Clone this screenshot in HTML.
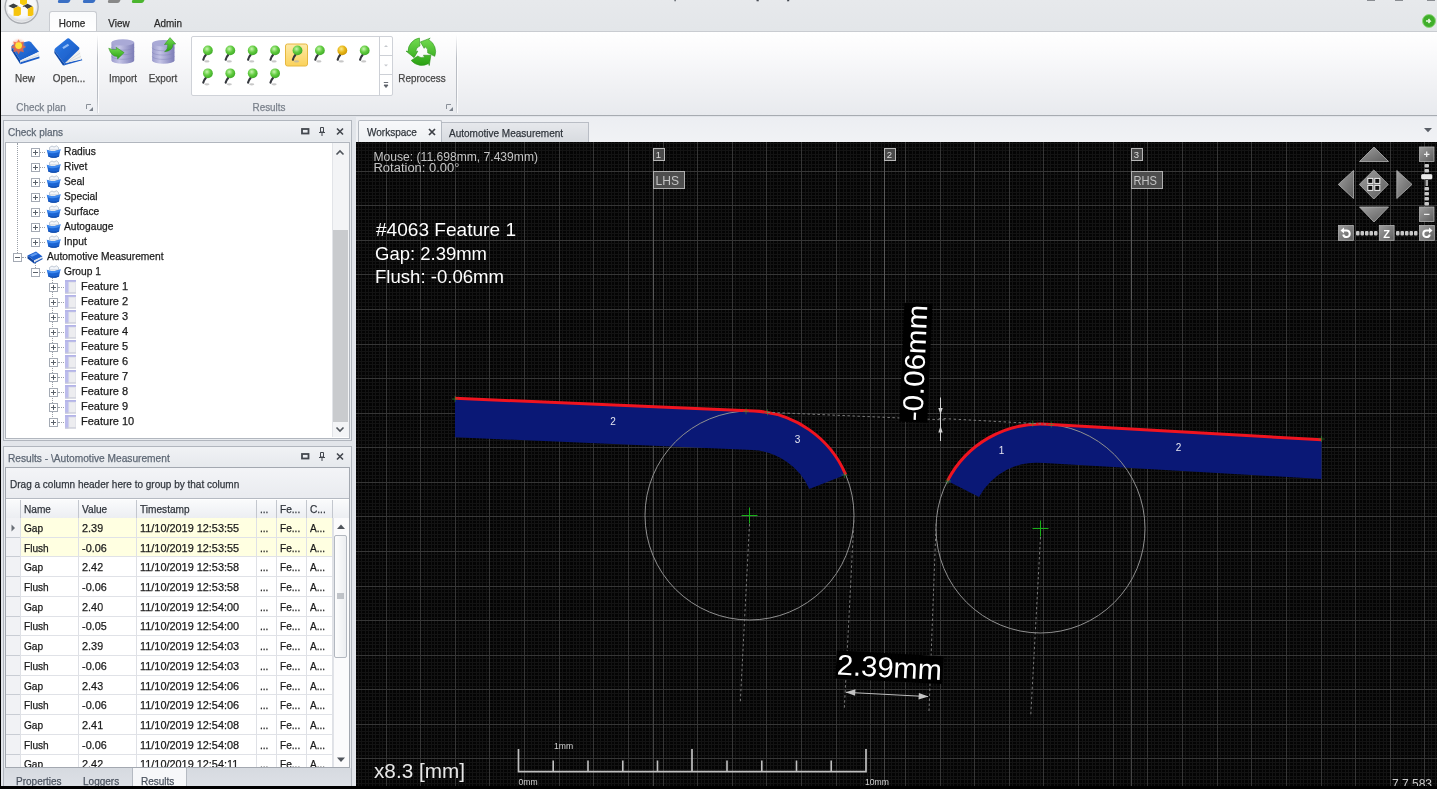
<!DOCTYPE html>
<html><head><meta charset="utf-8"><title>Automotive Measurement</title>
<style>
*{box-sizing:border-box;margin:0;padding:0}
html,body{width:1437px;height:789px;overflow:hidden;background:#000}
body{font-family:"Liberation Sans",sans-serif;font-size:11px;color:#1e1e1e;position:relative;-webkit-text-stroke:.25px}
.abs{position:absolute}
.t{position:absolute;white-space:nowrap;line-height:14px;transform-origin:0 0;transform:scaleX(.91)}
#win{position:absolute;left:1px;top:0;width:1436px;height:786px;background:#e2e5ea;overflow:hidden;will-change:transform}
#title{position:absolute;left:0;top:0;width:1436px;height:31px;background:linear-gradient(#e7e9ec,#e3e6e9)}
#ribbon{position:absolute;left:0;top:31px;width:1436px;height:85px;background:linear-gradient(#ffffff 0,#fbfbfc 20%,#eff0f3 70%,#e8eaee 100%);border-top:1px solid #c9ccd1;border-bottom:1px solid #a7abb1}
.rl{position:absolute;white-space:nowrap;font-size:11px;line-height:14px;color:#464646;text-align:center;transform:translateX(-50%) scaleX(.9)}
.gl{position:absolute;white-space:nowrap;font-size:11px;line-height:14px;color:#7a818b;text-align:center;transform:translateX(-50%) scaleX(.9)}
.panel{position:absolute;background:#e9ecf0;border:1px solid #b1b6be}
.phead{position:absolute;left:0;top:0;right:0;height:20px;background:linear-gradient(#f0f2f5,#e6e9ed);color:#5c6673}
.white{position:absolute;background:#fff;border:1px solid #b1b6be}
.trow{position:absolute;left:0;height:15px;line-height:15px;white-space:nowrap;font-size:11px;color:#1a1a1a;transform-origin:0 0;transform:scaleX(.93)}
.pm{position:absolute;width:9px;height:9px;border:1px solid #a4aab4;background:#fff}
.pm:before{content:"";position:absolute;left:1px;top:3px;width:5px;height:1px;background:#5a616b}
.pm.plus:after{content:"";position:absolute;left:3px;top:1px;width:1px;height:5px;background:#5a616b}
.cell{position:absolute;white-space:nowrap;font-size:11px;line-height:19px;color:#1a1a1a;overflow:hidden;transform-origin:0 0;transform:scaleX(.92)}
.cell.num{transform:scaleX(.99)}
#canvas{position:absolute;left:355px;top:142px;width:1081px;height:644px;background:#050505;overflow:hidden}
.wt{position:absolute;white-space:nowrap;color:#fff}
</style></head><body>
<div id="win">

<div id="title">
<div class="t" style="right:647px;top:-12px;font-size:11px;color:#3a3f47;transform-origin:100% 0">GapGun Pro 7.7.583 [Admin]</div>
<div class="abs" style="left:1366px;top:0;width:8px;height:1px;background:#8a8d92"></div>
<div class="abs" style="left:1394px;top:0;width:8px;height:1px;background:#8a8d92"></div>
<div class="abs" style="left:1426px;top:0;width:8px;height:1px;background:#8a8d92"></div>
<div class="abs" style="left:58px;top:-6px;width:12px;height:9px;background:#3a6fc4;border-radius:2px;transform:skewX(-20deg)"></div>
<div class="abs" style="left:83px;top:-6px;width:12px;height:9px;background:#3a6fc4;border-radius:2px;transform:skewX(-20deg)"></div>
<div class="abs" style="left:108px;top:-6px;width:12px;height:9px;background:#888;border-radius:2px;transform:skewX(-20deg)"></div>
<div class="abs" style="left:132px;top:-6px;width:12px;height:9px;background:#4bb52e;border-radius:2px;transform:skewX(-20deg)"></div>
<svg class="abs" style="left:0;top:0" width="44" height="30" viewBox="1 0 44 30">
<defs><radialGradient id="orb" cx="50%" cy="40%" r="60%"><stop offset="0" stop-color="#ffffff"/><stop offset="0.800" stop-color="#f4f5f6"/><stop offset="1" stop-color="#d4d6da"/></radialGradient>
<filter id="ob" x="-20%" y="-20%" width="140%" height="140%"><feGaussianBlur stdDeviation=".5"/></filter></defs>
<circle cx="21.600" cy="6.800" r="17.200" fill="#a9acb1"/><circle cx="21.600" cy="6.800" r="15.900" fill="#e9eaec"/><circle cx="21.600" cy="6.600" r="15" fill="url(#orb)"/>
<g filter="url(#ob)">
<path d="M20 -1h7v4.500l-3.500 2-3.500-2z" fill="#f6cc10"/>
<path d="M8.400 6l5-2.400 5 2.400-5 2.600z" fill="#3c4042"/><path d="M22.500 6.200l5-2.500 5.100 2.500-5.100 2.700z" fill="#3c4042"/>
<path d="M13.400 8.600l5-2.400 2.500 1.400v6.800l-2.500 1.500-5-.1z" fill="#f6c410"/>
<path d="M27.600 8.900l5.100-2.600.7 1.400v7l-1.800 1.200h-4z" fill="#f6c410"/>
<path d="M7.900 6.800l5.500 1.800v7.200L7.900 13z" fill="#fbfbfb"/><path d="M21 8l3.500-1.500 3.100 2.400v7h-6.600z" fill="#fafafa"/>
</g>
</svg>
<div class="abs" style="left:48px;top:11px;width:48px;height:21px;background:linear-gradient(#fafbfc,#ffffff);border:1px solid #c9ccd1;border-bottom:none;border-radius:3px 3px 0 0"></div>
<div class="rl" style="left:71px;top:15.500px;color:#2a2a2a">Home</div>
<div class="rl" style="left:118px;top:15.500px;color:#2a2a2a">View</div>
<div class="rl" style="left:167px;top:15.500px;color:#2a2a2a">Admin</div>
<svg class="abs" style="left:1420px;top:13px" width="16" height="16" viewBox="0 0 16 16"><circle cx="8" cy="8" r="6.5" fill="#3fae2a"/><circle cx="8" cy="8" r="6.5" fill="none" stroke="#8ed67c" stroke-width="1"/><path d="M5 8h4l-1.5-2M9 8l-1.5 2" stroke="#e6f7e0" stroke-width="1.5" fill="none"/></svg>
</div>
<div id="ribbon">
<div class="abs" style="left:0;top:0;width:96px;height:83px;background:linear-gradient(rgba(255,255,255,.6),rgba(240,242,246,.5))"></div>
<div class="abs" style="left:96px;top:3px;width:1px;height:78px;background:linear-gradient(rgba(180,184,190,0),#b9bdc4 30%,#b9bdc4 80%,rgba(180,184,190,.3))"></div>
<div class="abs" style="left:97px;top:3px;width:1px;height:78px;background:rgba(255,255,255,.8)"></div>
<div class="abs" style="left:455px;top:3px;width:1px;height:78px;background:linear-gradient(rgba(180,184,190,0),#b9bdc4 30%,#b9bdc4 80%,rgba(180,184,190,.3))"></div>
<div class="abs" style="left:456px;top:3px;width:1px;height:78px;background:rgba(255,255,255,.8)"></div>
<svg class="abs" style="left:0;top:0" width="480" height="84" viewBox="1 32 480 84">
<defs><linearGradient id="cyg" x1="0" x2="1"><stop offset="0" stop-color="#9c9ccc"/><stop offset=".35" stop-color="#c4c4e6"/><stop offset="1" stop-color="#7c7cb6"/></linearGradient><radialGradient id="pg" cx="40%" cy="35%" r="70%"><stop offset="0" stop-color="#c8f5b0"/><stop offset=".5" stop-color="#62cc40"/><stop offset="1" stop-color="#3aa624"/></radialGradient><radialGradient id="py" cx="40%" cy="35%" r="70%"><stop offset="0" stop-color="#fbe98a"/><stop offset=".5" stop-color="#e8b818"/><stop offset="1" stop-color="#c89208"/></radialGradient><linearGradient id="bk" x1="0" y1="0" x2="1" y2="1"><stop offset="0" stop-color="#2f7be6"/><stop offset="1" stop-color="#1556c0"/></linearGradient><linearGradient id="gr" x1="0" y1="0" x2="0" y2="1"><stop offset="0" stop-color="#74dc52"/><stop offset="1" stop-color="#28a012"/></linearGradient><filter id="bl" x="-30%" y="-30%" width="160%" height="160%"><feGaussianBlur stdDeviation=".45"/></filter><filter id="bl2" x="-50%" y="-50%" width="200%" height="200%"><feGaussianBlur stdDeviation="1.1"/></filter></defs>
<g filter="url(#bl)"><path d="M11.400 46.500Q12 44.800 14 44.300L28.600 41.300Q30 41.200 31 42.300L39 51.800L20.300 60.600Z" fill="url(#bk)"/><path d="M11.400 46.500L20.300 60.600V64.200L11.600 50.500Z" fill="#0f48a8"/><path d="M20.300 60.600L39 51.800L39.300 56.800L20.600 62.500Z" fill="#eef1f6"/><path d="M20.500 62.300L39.300 56.600L39.500 58.200L20.400 64.300Z" fill="#1a5cc8"/><path d="M21 61.600L39 55" stroke="#b9c2d0" stroke-width=".6"/></g>
<circle cx="18.600" cy="45.500" r="5.800" fill="#f48a6a" opacity=".55" filter="url(#bl2)"/>
<path d="M18.600 39.300l1.700 3.300 3.600-1-1 3.600 3.300 1.700-3.300 1.700 1 3.600-3.600-1-1.700 3.300-1.700-3.300-3.600 1 1-3.600-3.300-1.700 3.300-1.700-1-3.600 3.600 1z" fill="#f2673a" opacity=".8" filter="url(#bl)"/>
<circle cx="18.600" cy="45.600" r="3.400" fill="#ffe23a" filter="url(#bl)"/>
<g filter="url(#bl)"><path d="M64.500 65.200L82.300 60.300L81.800 58.800L64 63.600Z" fill="#1a5cc8"/><path d="M63.900 63.300L79.300 49.500L81.600 59.600Z" fill="#f1f2f0"/><path d="M66 62.500L80.200 53M66.500 63L81 56.500" stroke="#c9cdd2" stroke-width=".6"/><path d="M54.400 50.500Q54.200 49 55.500 48L67.300 38.600Q68.600 37.900 69.800 38.900L79.200 47.600Q79.700 48.600 79 49.600L64.300 63.800Z" fill="url(#bk)"/><path d="M54.400 50.500L64.300 63.800L64.600 65.600L62.800 65.200L54.400 53Z" fill="#0f48a8"/><path d="M62.300 47.300l5.600-3.600 1.300 1.700-5.600 3.600z" fill="#8fbaf6"/></g>
<g filter="url(#bl)"><path d="M111.4 42.400000000000006V60.599999999999994A11.399999999999991 3.2 0 0 0 134.2 60.599999999999994V42.400000000000006Z" fill="url(#cyg)"/><ellipse cx="122.8" cy="42.400000000000006" rx="11.399999999999991" ry="3.2" fill="#a9a9d6"/><path d="M111.4 47.0A11.399999999999991 3.2 0 0 0 134.2 47.0" fill="none" stroke="#8080b8" stroke-width=".7" opacity=".6"/><path d="M111.4 51.5A11.399999999999991 3.2 0 0 0 134.2 51.5" fill="none" stroke="#8080b8" stroke-width=".7" opacity=".6"/><path d="M111.4 56.1A11.399999999999991 3.2 0 0 0 134.2 56.1" fill="none" stroke="#8080b8" stroke-width=".7" opacity=".6"/><path d="M108.700 48.200Q113 50.300 116.500 49.400L116 47.300L124.200 52.600L117.600 59L117.300 56.400Q111.500 56.800 108.700 48.200Z" fill="url(#gr)" stroke="#2c8f1c" stroke-width=".5"/></g>
<g filter="url(#bl)"><path d="M152.1 43.2V60.599999999999994A11.200000000000003 3.2 0 0 0 174.5 60.599999999999994V43.2Z" fill="url(#cyg)"/><ellipse cx="163.3" cy="43.2" rx="11.200000000000003" ry="3.2" fill="#a9a9d6"/><path d="M152.1 47.6A11.200000000000003 3.2 0 0 0 174.5 47.6" fill="none" stroke="#8080b8" stroke-width=".7" opacity=".6"/><path d="M152.1 51.9A11.200000000000003 3.2 0 0 0 174.5 51.9" fill="none" stroke="#8080b8" stroke-width=".7" opacity=".6"/><path d="M152.1 56.2A11.200000000000003 3.2 0 0 0 174.5 56.2" fill="none" stroke="#8080b8" stroke-width=".7" opacity=".6"/><path d="M164.600 51.800Q168 49.500 167.800 44.300L164.400 44.600L170 37.600L175.800 44L172.800 44.200Q173.300 50.500 164.600 51.800Z" fill="url(#gr)" stroke="#2c8f1c" stroke-width=".5"/></g>
<rect x="191.500" y="36.500" width="201" height="59" rx="1.500" fill="#fff" stroke="#cfd2d8"/>
<path d="M379.500 36.500V95.500M379.500 55.500H392.500M379.500 74.500H392.500" stroke="#cdd0d6" fill="none"/>
<path d="M384 47l2-2 2 2zM384 64.500l2 2 2-2z" fill="#c6c9ce"/>
<path d="M383.800 82.500h4.400M384 85h4l-2 2.500z" stroke="#5a5f67" stroke-width=".9" fill="#5a5f67"/>
<defs><linearGradient id="sel" x1="0" y1="0" x2="0" y2="1"><stop offset="0" stop-color="#fde9a8"/><stop offset="1" stop-color="#fbd25a"/></linearGradient></defs>
<rect x="285.500" y="44" width="22" height="22" rx="2" fill="url(#sel)" stroke="#e6b840"/>
<g filter="url(#bl)"><ellipse cx="206.9" cy="61.4" rx="2.600" ry="1.100" fill="#b0b0b0" opacity=".7"/><path d="M205.9 54.8Q204.0 56.9 203.3 59.7" fill="none" stroke="#34373d" stroke-width="2.200" stroke-linecap="round"/><circle cx="207.9" cy="50.4" r="4.900" fill="url(#pg)"/></g>
<g filter="url(#bl)"><ellipse cx="229.3" cy="61.4" rx="2.600" ry="1.100" fill="#b0b0b0" opacity=".7"/><path d="M228.3 54.8Q226.4 56.9 225.7 59.7" fill="none" stroke="#34373d" stroke-width="2.200" stroke-linecap="round"/><circle cx="230.3" cy="50.4" r="4.900" fill="url(#pg)"/></g>
<g filter="url(#bl)"><ellipse cx="251.7" cy="61.4" rx="2.600" ry="1.100" fill="#b0b0b0" opacity=".7"/><path d="M250.7 54.8Q248.8 56.9 248.1 59.7" fill="none" stroke="#34373d" stroke-width="2.200" stroke-linecap="round"/><circle cx="252.7" cy="50.4" r="4.900" fill="url(#pg)"/></g>
<g filter="url(#bl)"><ellipse cx="274.1" cy="61.4" rx="2.600" ry="1.100" fill="#b0b0b0" opacity=".7"/><path d="M273.1 54.8Q271.2 56.9 270.5 59.7" fill="none" stroke="#34373d" stroke-width="2.200" stroke-linecap="round"/><circle cx="275.1" cy="50.4" r="4.900" fill="url(#pg)"/></g>
<g filter="url(#bl)"><ellipse cx="296.5" cy="61.4" rx="2.600" ry="1.100" fill="#b0b0b0" opacity=".7"/><path d="M295.5 54.8Q293.6 56.9 292.9 59.7" fill="none" stroke="#34373d" stroke-width="2.200" stroke-linecap="round"/><circle cx="297.5" cy="50.4" r="4.900" fill="url(#pg)"/></g>
<g filter="url(#bl)"><ellipse cx="318.9" cy="61.4" rx="2.600" ry="1.100" fill="#b0b0b0" opacity=".7"/><path d="M317.9 54.8Q316.0 56.9 315.3 59.7" fill="none" stroke="#34373d" stroke-width="2.200" stroke-linecap="round"/><circle cx="319.9" cy="50.4" r="4.900" fill="url(#pg)"/></g>
<g filter="url(#bl)"><ellipse cx="341.3" cy="61.4" rx="2.600" ry="1.100" fill="#b0b0b0" opacity=".7"/><path d="M340.3 54.8Q338.4 56.9 337.7 59.7" fill="none" stroke="#34373d" stroke-width="2.200" stroke-linecap="round"/><circle cx="342.3" cy="50.4" r="4.900" fill="url(#py)"/></g>
<g filter="url(#bl)"><ellipse cx="363.7" cy="61.4" rx="2.600" ry="1.100" fill="#b0b0b0" opacity=".7"/><path d="M362.7 54.8Q360.8 56.9 360.1 59.7" fill="none" stroke="#34373d" stroke-width="2.200" stroke-linecap="round"/><circle cx="364.7" cy="50.4" r="4.900" fill="url(#pg)"/></g>
<g filter="url(#bl)"><ellipse cx="206.9" cy="84.3" rx="2.600" ry="1.100" fill="#b0b0b0" opacity=".7"/><path d="M205.9 77.7Q204.0 79.8 203.3 82.6" fill="none" stroke="#34373d" stroke-width="2.200" stroke-linecap="round"/><circle cx="207.9" cy="73.3" r="4.900" fill="url(#pg)"/></g>
<g filter="url(#bl)"><ellipse cx="229.3" cy="84.3" rx="2.600" ry="1.100" fill="#b0b0b0" opacity=".7"/><path d="M228.3 77.7Q226.4 79.8 225.7 82.6" fill="none" stroke="#34373d" stroke-width="2.200" stroke-linecap="round"/><circle cx="230.3" cy="73.3" r="4.900" fill="url(#pg)"/></g>
<g filter="url(#bl)"><ellipse cx="251.7" cy="84.3" rx="2.600" ry="1.100" fill="#b0b0b0" opacity=".7"/><path d="M250.7 77.7Q248.8 79.8 248.1 82.6" fill="none" stroke="#34373d" stroke-width="2.200" stroke-linecap="round"/><circle cx="252.7" cy="73.3" r="4.900" fill="url(#pg)"/></g>
<g filter="url(#bl)"><ellipse cx="274.1" cy="84.3" rx="2.600" ry="1.100" fill="#b0b0b0" opacity=".7"/><path d="M273.1 77.7Q271.2 79.8 270.5 82.6" fill="none" stroke="#34373d" stroke-width="2.200" stroke-linecap="round"/><circle cx="275.1" cy="73.3" r="4.900" fill="url(#pg)"/></g>
<g filter="url(#bl)"><path d="M419.40 38.01A13.800 13.800 0 0 0 408.00 51.60L406.01 51.05L414.08 57.63L417.82 51.18L415.80 51.39A6 6 0 0 1 419.95 45.89ZM411.23 60.47A13.800 13.800 0 0 0 428.70 63.55L429.22 65.55L430.89 55.27L423.43 55.25L424.62 56.90A6 6 0 0 1 417.79 56.06ZM434.77 56.32A13.800 13.800 0 0 0 428.70 39.65L430.17 38.20L420.44 41.90L424.15 48.36L424.98 46.51A6 6 0 0 1 427.67 52.85Z" fill="url(#gr)" stroke="#2a921a" stroke-width=".6"/></g>
</svg>
<div class="rl" style="left:24px;top:38.7px">New</div>
<div class="rl" style="left:67.5px;top:38.7px">Open...</div>
<div class="rl" style="left:121.5px;top:38.7px">Import</div>
<div class="rl" style="left:162px;top:38.7px">Export</div>
<div class="rl" style="left:420.5px;top:38.7px">Reprocess</div>
<div class="gl" style="left:40px;top:68px">Check plan</div>
<div class="gl" style="left:268px;top:68px">Results</div>
<svg class="abs" style="left:85px;top:72px" width="8" height="8" viewBox="0 0 8 8"><path d="M.5 5V.5H5" fill="none" stroke="#8a9099"/><path d="M7 3v4H3z" fill="#7a818b"/></svg>
<svg class="abs" style="left:444.5px;top:72px" width="8" height="8" viewBox="0 0 8 8"><path d="M.5 5V.5H5" fill="none" stroke="#8a9099"/><path d="M7 3v4H3z" fill="#7a818b"/></svg>
</div>
<div class="panel" style="left:2px;top:120px;width:349px;height:321px">
<div class="phead"><div class="t" style="left:4px;top:4px;color:#5c6673">Check plans</div>
<svg class="abs" style="left:296px;top:5px" width="48" height="12" viewBox="0 0 48 12">
<rect x="2" y="3" width="6.500" height="4.500" fill="none" stroke="#43474e" stroke-width="1.800"/>
<path d="M20.500 1.500h3v4.500h-3zM19 6.500h6M22 7v3" fill="none" stroke="#43474e" stroke-width="1"/>
<path d="M37 2.500l6 6M43 2.500l-6 6" stroke="#43474e" stroke-width="1.600"/></svg>
</div>
<div class="white" style="left:1px;top:21px;width:345px;height:297px;overflow:hidden">
<div class="abs" style="left:11px;top:0;width:0;height:110px;border-left:1px dotted #9aa0a8"></div>
<div class="abs" style="left:29px;top:119px;width:0;height:6px;border-left:1px dotted #9aa0a8"></div>
<div class="abs" style="left:46px;top:135px;width:0;height:143px;border-left:1px dotted #9aa0a8"></div>
<div class="pm plus" style="left:25px;top:5px"></div>
<div class="abs" style="left:34px;top:9px;width:5px;height:0;border-top:1px dotted #9aa0a8"></div>
<svg class="abs" style="left:40px;top:2px" width="15" height="14" viewBox="0 0 15 14">
<path d="M3.500 5V2.500l2.500-1.500 2 1 2.500-1.200 2 1.700V5z" fill="#f2f5fa" stroke="#a9b4c4" stroke-width=".7"/>
<path d="M.8 4.800c3.200 1.800 9.700 1.800 13.700-.5l-1.500 7.200c-3 1.800-7.500 1.800-10.700 0z" fill="#1a63d2"/><path d="M.8 4.800c3.200 1.800 9.700 1.800 13.700-.5l-.5 2.300c-4 2.200-9.500 2.200-12.700.4z" fill="#3f8af0"/><path d="M2 10.500c3.200 1.600 8 1.600 11.200 0l-.2 1c-3 1.800-7.500 1.800-10.700 0z" fill="#134ba8"/></svg>
<div class="trow" style="left:57.5px;top:1px">Radius</div>
<div class="pm plus" style="left:25px;top:20px"></div>
<div class="abs" style="left:34px;top:24px;width:5px;height:0;border-top:1px dotted #9aa0a8"></div>
<svg class="abs" style="left:40px;top:17px" width="15" height="14" viewBox="0 0 15 14">
<path d="M3.500 5V2.500l2.500-1.500 2 1 2.500-1.200 2 1.700V5z" fill="#f2f5fa" stroke="#a9b4c4" stroke-width=".7"/>
<path d="M.8 4.800c3.200 1.800 9.700 1.800 13.700-.5l-1.500 7.200c-3 1.800-7.500 1.800-10.700 0z" fill="#1a63d2"/><path d="M.8 4.800c3.200 1.800 9.700 1.800 13.700-.5l-.5 2.300c-4 2.200-9.500 2.200-12.700.4z" fill="#3f8af0"/><path d="M2 10.500c3.200 1.600 8 1.600 11.200 0l-.2 1c-3 1.800-7.500 1.800-10.700 0z" fill="#134ba8"/></svg>
<div class="trow" style="left:57.5px;top:16px">Rivet</div>
<div class="pm plus" style="left:25px;top:35px"></div>
<div class="abs" style="left:34px;top:39px;width:5px;height:0;border-top:1px dotted #9aa0a8"></div>
<svg class="abs" style="left:40px;top:32px" width="15" height="14" viewBox="0 0 15 14">
<path d="M3.500 5V2.500l2.500-1.500 2 1 2.500-1.200 2 1.700V5z" fill="#f2f5fa" stroke="#a9b4c4" stroke-width=".7"/>
<path d="M.8 4.800c3.200 1.800 9.700 1.800 13.700-.5l-1.500 7.200c-3 1.800-7.500 1.800-10.700 0z" fill="#1a63d2"/><path d="M.8 4.800c3.200 1.800 9.700 1.800 13.700-.5l-.5 2.300c-4 2.200-9.500 2.200-12.700.4z" fill="#3f8af0"/><path d="M2 10.500c3.200 1.600 8 1.600 11.200 0l-.2 1c-3 1.800-7.500 1.800-10.700 0z" fill="#134ba8"/></svg>
<div class="trow" style="left:57.5px;top:31px">Seal</div>
<div class="pm plus" style="left:25px;top:50px"></div>
<div class="abs" style="left:34px;top:54px;width:5px;height:0;border-top:1px dotted #9aa0a8"></div>
<svg class="abs" style="left:40px;top:47px" width="15" height="14" viewBox="0 0 15 14">
<path d="M3.500 5V2.500l2.500-1.500 2 1 2.500-1.200 2 1.700V5z" fill="#f2f5fa" stroke="#a9b4c4" stroke-width=".7"/>
<path d="M.8 4.800c3.200 1.800 9.700 1.800 13.700-.5l-1.500 7.200c-3 1.800-7.500 1.800-10.700 0z" fill="#1a63d2"/><path d="M.8 4.800c3.200 1.800 9.700 1.800 13.700-.5l-.5 2.300c-4 2.200-9.500 2.200-12.700.4z" fill="#3f8af0"/><path d="M2 10.500c3.200 1.600 8 1.600 11.200 0l-.2 1c-3 1.800-7.500 1.800-10.700 0z" fill="#134ba8"/></svg>
<div class="trow" style="left:57.5px;top:46px">Special</div>
<div class="pm plus" style="left:25px;top:65px"></div>
<div class="abs" style="left:34px;top:69px;width:5px;height:0;border-top:1px dotted #9aa0a8"></div>
<svg class="abs" style="left:40px;top:62px" width="15" height="14" viewBox="0 0 15 14">
<path d="M3.500 5V2.500l2.500-1.500 2 1 2.500-1.200 2 1.700V5z" fill="#f2f5fa" stroke="#a9b4c4" stroke-width=".7"/>
<path d="M.8 4.800c3.200 1.800 9.700 1.800 13.700-.5l-1.500 7.200c-3 1.800-7.500 1.800-10.700 0z" fill="#1a63d2"/><path d="M.8 4.800c3.200 1.800 9.700 1.800 13.700-.5l-.5 2.300c-4 2.200-9.500 2.200-12.700.4z" fill="#3f8af0"/><path d="M2 10.500c3.200 1.600 8 1.600 11.200 0l-.2 1c-3 1.800-7.500 1.800-10.700 0z" fill="#134ba8"/></svg>
<div class="trow" style="left:57.5px;top:61px">Surface</div>
<div class="pm plus" style="left:25px;top:80px"></div>
<div class="abs" style="left:34px;top:84px;width:5px;height:0;border-top:1px dotted #9aa0a8"></div>
<svg class="abs" style="left:40px;top:77px" width="15" height="14" viewBox="0 0 15 14">
<path d="M3.500 5V2.500l2.500-1.500 2 1 2.500-1.200 2 1.700V5z" fill="#f2f5fa" stroke="#a9b4c4" stroke-width=".7"/>
<path d="M.8 4.800c3.200 1.800 9.700 1.800 13.700-.5l-1.500 7.200c-3 1.800-7.500 1.800-10.700 0z" fill="#1a63d2"/><path d="M.8 4.800c3.200 1.800 9.700 1.800 13.700-.5l-.5 2.300c-4 2.200-9.500 2.200-12.700.4z" fill="#3f8af0"/><path d="M2 10.500c3.200 1.600 8 1.600 11.200 0l-.2 1c-3 1.800-7.500 1.800-10.700 0z" fill="#134ba8"/></svg>
<div class="trow" style="left:57.5px;top:76px">Autogauge</div>
<div class="pm plus" style="left:25px;top:95px"></div>
<div class="abs" style="left:34px;top:99px;width:5px;height:0;border-top:1px dotted #9aa0a8"></div>
<svg class="abs" style="left:40px;top:92px" width="15" height="14" viewBox="0 0 15 14">
<path d="M3.500 5V2.500l2.500-1.500 2 1 2.500-1.200 2 1.700V5z" fill="#f2f5fa" stroke="#a9b4c4" stroke-width=".7"/>
<path d="M.8 4.800c3.200 1.800 9.700 1.800 13.700-.5l-1.500 7.200c-3 1.800-7.500 1.800-10.700 0z" fill="#1a63d2"/><path d="M.8 4.800c3.200 1.800 9.700 1.800 13.700-.5l-.5 2.300c-4 2.200-9.500 2.200-12.700.4z" fill="#3f8af0"/><path d="M2 10.500c3.200 1.600 8 1.600 11.200 0l-.2 1c-3 1.800-7.500 1.800-10.700 0z" fill="#134ba8"/></svg>
<div class="trow" style="left:57.5px;top:91px">Input</div>
<div class="pm" style="left:7px;top:110px"></div>
<div class="abs" style="left:16px;top:114px;width:4px;height:0;border-top:1px dotted #9aa0a8"></div>
<svg class="abs" style="left:21px;top:108px" width="16" height="13" viewBox="0 0 16 13">
<path d="M.5 4.500l8.500-4 6.500 5-8.500 4z" fill="#1a5fd0"/><path d="M.5 4.500l6.500 5v3L.5 7.500z" fill="#0f429c"/><path d="M7 9.500l8.500-4v2l-8.500 4.500z" fill="#dfe5ee"/><path d="M7 11.500l8.500-4.500v1.200l-8.500 4.600z" fill="#1752b8"/><path d="M3 4.300l6-2.800 2 1.400-6 2.900z" fill="#5f9af0"/></svg>
<div class="trow" style="left:40.5px;top:106px">Automotive Measurement</div>
<div class="pm" style="left:25px;top:125px"></div>
<div class="abs" style="left:34px;top:129px;width:5px;height:0;border-top:1px dotted #9aa0a8"></div>
<svg class="abs" style="left:40px;top:122px" width="15" height="14" viewBox="0 0 15 14">
<path d="M3.500 5V2.500l2.500-1.500 2 1 2.500-1.200 2 1.700V5z" fill="#f2f5fa" stroke="#a9b4c4" stroke-width=".7"/>
<path d="M.8 4.800c3.200 1.800 9.700 1.800 13.700-.5l-1.500 7.200c-3 1.800-7.500 1.800-10.700 0z" fill="#1a63d2"/><path d="M.8 4.800c3.200 1.800 9.700 1.800 13.700-.5l-.5 2.300c-4 2.200-9.500 2.200-12.700.4z" fill="#3f8af0"/><path d="M2 10.500c3.200 1.600 8 1.600 11.200 0l-.2 1c-3 1.800-7.500 1.800-10.700 0z" fill="#134ba8"/></svg>
<div class="trow" style="left:57.5px;top:121px">Group 1</div>
<div class="pm plus" style="left:42.5px;top:140px"></div>
<div class="abs" style="left:51.5px;top:144px;width:6.5px;height:0;border-top:1px dotted #9aa0a8"></div>
<svg class="abs" style="left:59px;top:137px" width="11" height="14" viewBox="0 0 11 14">
<rect x="0" y="0" width="11" height="13.500" fill="#e3e4ea"/><rect x="0" y="0" width="3.500" height="13.500" fill="#bcbcec"/><rect x="0" y="0" width="11" height="1.800" fill="#b4b4e8"/><rect x="4.500" y="3" width="5.500" height="9" fill="#ededf0"/><rect x="0" y="12.500" width="11" height="1" fill="#c8c9d6"/></svg>
<div class="trow" style="left:75px;top:136px;transform:scaleX(1.0)">Feature 1</div>
<div class="pm plus" style="left:42.5px;top:155px"></div>
<div class="abs" style="left:51.5px;top:159px;width:6.5px;height:0;border-top:1px dotted #9aa0a8"></div>
<svg class="abs" style="left:59px;top:152px" width="11" height="14" viewBox="0 0 11 14">
<rect x="0" y="0" width="11" height="13.500" fill="#e3e4ea"/><rect x="0" y="0" width="3.500" height="13.500" fill="#bcbcec"/><rect x="0" y="0" width="11" height="1.800" fill="#b4b4e8"/><rect x="4.500" y="3" width="5.500" height="9" fill="#ededf0"/><rect x="0" y="12.500" width="11" height="1" fill="#c8c9d6"/></svg>
<div class="trow" style="left:75px;top:151px;transform:scaleX(1.0)">Feature 2</div>
<div class="pm plus" style="left:42.5px;top:170px"></div>
<div class="abs" style="left:51.5px;top:174px;width:6.5px;height:0;border-top:1px dotted #9aa0a8"></div>
<svg class="abs" style="left:59px;top:167px" width="11" height="14" viewBox="0 0 11 14">
<rect x="0" y="0" width="11" height="13.500" fill="#e3e4ea"/><rect x="0" y="0" width="3.500" height="13.500" fill="#bcbcec"/><rect x="0" y="0" width="11" height="1.800" fill="#b4b4e8"/><rect x="4.500" y="3" width="5.500" height="9" fill="#ededf0"/><rect x="0" y="12.500" width="11" height="1" fill="#c8c9d6"/></svg>
<div class="trow" style="left:75px;top:166px;transform:scaleX(1.0)">Feature 3</div>
<div class="pm plus" style="left:42.5px;top:185px"></div>
<div class="abs" style="left:51.5px;top:189px;width:6.5px;height:0;border-top:1px dotted #9aa0a8"></div>
<svg class="abs" style="left:59px;top:182px" width="11" height="14" viewBox="0 0 11 14">
<rect x="0" y="0" width="11" height="13.500" fill="#e3e4ea"/><rect x="0" y="0" width="3.500" height="13.500" fill="#bcbcec"/><rect x="0" y="0" width="11" height="1.800" fill="#b4b4e8"/><rect x="4.500" y="3" width="5.500" height="9" fill="#ededf0"/><rect x="0" y="12.500" width="11" height="1" fill="#c8c9d6"/></svg>
<div class="trow" style="left:75px;top:181px;transform:scaleX(1.0)">Feature 4</div>
<div class="pm plus" style="left:42.5px;top:200px"></div>
<div class="abs" style="left:51.5px;top:204px;width:6.5px;height:0;border-top:1px dotted #9aa0a8"></div>
<svg class="abs" style="left:59px;top:197px" width="11" height="14" viewBox="0 0 11 14">
<rect x="0" y="0" width="11" height="13.500" fill="#e3e4ea"/><rect x="0" y="0" width="3.500" height="13.500" fill="#bcbcec"/><rect x="0" y="0" width="11" height="1.800" fill="#b4b4e8"/><rect x="4.500" y="3" width="5.500" height="9" fill="#ededf0"/><rect x="0" y="12.500" width="11" height="1" fill="#c8c9d6"/></svg>
<div class="trow" style="left:75px;top:196px;transform:scaleX(1.0)">Feature 5</div>
<div class="pm plus" style="left:42.5px;top:215px"></div>
<div class="abs" style="left:51.5px;top:219px;width:6.5px;height:0;border-top:1px dotted #9aa0a8"></div>
<svg class="abs" style="left:59px;top:212px" width="11" height="14" viewBox="0 0 11 14">
<rect x="0" y="0" width="11" height="13.500" fill="#e3e4ea"/><rect x="0" y="0" width="3.500" height="13.500" fill="#bcbcec"/><rect x="0" y="0" width="11" height="1.800" fill="#b4b4e8"/><rect x="4.500" y="3" width="5.500" height="9" fill="#ededf0"/><rect x="0" y="12.500" width="11" height="1" fill="#c8c9d6"/></svg>
<div class="trow" style="left:75px;top:211px;transform:scaleX(1.0)">Feature 6</div>
<div class="pm plus" style="left:42.5px;top:230px"></div>
<div class="abs" style="left:51.5px;top:234px;width:6.5px;height:0;border-top:1px dotted #9aa0a8"></div>
<svg class="abs" style="left:59px;top:227px" width="11" height="14" viewBox="0 0 11 14">
<rect x="0" y="0" width="11" height="13.500" fill="#e3e4ea"/><rect x="0" y="0" width="3.500" height="13.500" fill="#bcbcec"/><rect x="0" y="0" width="11" height="1.800" fill="#b4b4e8"/><rect x="4.500" y="3" width="5.500" height="9" fill="#ededf0"/><rect x="0" y="12.500" width="11" height="1" fill="#c8c9d6"/></svg>
<div class="trow" style="left:75px;top:226px;transform:scaleX(1.0)">Feature 7</div>
<div class="pm plus" style="left:42.5px;top:245px"></div>
<div class="abs" style="left:51.5px;top:249px;width:6.5px;height:0;border-top:1px dotted #9aa0a8"></div>
<svg class="abs" style="left:59px;top:242px" width="11" height="14" viewBox="0 0 11 14">
<rect x="0" y="0" width="11" height="13.500" fill="#e3e4ea"/><rect x="0" y="0" width="3.500" height="13.500" fill="#bcbcec"/><rect x="0" y="0" width="11" height="1.800" fill="#b4b4e8"/><rect x="4.500" y="3" width="5.500" height="9" fill="#ededf0"/><rect x="0" y="12.500" width="11" height="1" fill="#c8c9d6"/></svg>
<div class="trow" style="left:75px;top:241px;transform:scaleX(1.0)">Feature 8</div>
<div class="pm plus" style="left:42.5px;top:260px"></div>
<div class="abs" style="left:51.5px;top:264px;width:6.5px;height:0;border-top:1px dotted #9aa0a8"></div>
<svg class="abs" style="left:59px;top:257px" width="11" height="14" viewBox="0 0 11 14">
<rect x="0" y="0" width="11" height="13.500" fill="#e3e4ea"/><rect x="0" y="0" width="3.500" height="13.500" fill="#bcbcec"/><rect x="0" y="0" width="11" height="1.800" fill="#b4b4e8"/><rect x="4.500" y="3" width="5.500" height="9" fill="#ededf0"/><rect x="0" y="12.500" width="11" height="1" fill="#c8c9d6"/></svg>
<div class="trow" style="left:75px;top:256px;transform:scaleX(1.0)">Feature 9</div>
<div class="pm plus" style="left:42.5px;top:275px"></div>
<div class="abs" style="left:51.5px;top:279px;width:6.5px;height:0;border-top:1px dotted #9aa0a8"></div>
<svg class="abs" style="left:59px;top:272px" width="11" height="14" viewBox="0 0 11 14">
<rect x="0" y="0" width="11" height="13.500" fill="#e3e4ea"/><rect x="0" y="0" width="3.500" height="13.500" fill="#bcbcec"/><rect x="0" y="0" width="11" height="1.800" fill="#b4b4e8"/><rect x="4.500" y="3" width="5.500" height="9" fill="#ededf0"/><rect x="0" y="12.500" width="11" height="1" fill="#c8c9d6"/></svg>
<div class="trow" style="left:75px;top:271px;transform:scaleX(1.0)">Feature 10</div>
<div class="abs" style="left:326px;top:0;width:17px;height:294px;background:#f3f4f6;border-left:1px solid #e2e4e8"></div>
<div class="abs" style="left:327px;top:87px;width:15px;height:192px;background:#c9cbce"></div>
<svg class="abs" style="left:329px;top:6px" width="10" height="7" viewBox="0 0 10 7"><path d="M1.500 5.500l3.500-3.500 3.500 3.500" fill="none" stroke="#50555c" stroke-width="1.600"/></svg>
<svg class="abs" style="left:329px;top:283px" width="10" height="7" viewBox="0 0 10 7"><path d="M1.500 1.500l3.500 3.500 3.500-3.500" fill="none" stroke="#50555c" stroke-width="1.600"/></svg>
</div></div>
<div class="panel" style="left:2px;top:446px;width:349px;height:341px">
<div class="phead" style="height:20px"><div class="t" style="left:4px;top:3.500px;color:#5c6673;transform:scaleX(.925)">Results - \Automotive Measurement</div>
<svg class="abs" style="left:296px;top:4px" width="48" height="12" viewBox="0 0 48 12">
<rect x="2" y="3" width="6.500" height="4.500" fill="none" stroke="#43474e" stroke-width="1.800"/>
<path d="M20.500 1.500h3v4.500h-3zM19 6.500h6M22 7v3" fill="none" stroke="#43474e" stroke-width="1"/>
<path d="M37 2.500l6 6M43 2.500l-6 6" stroke="#43474e" stroke-width="1.600"/></svg>
</div>
<div class="abs" style="left:1px;top:20px;width:345px;height:301px;background:#fff;border:1px solid #a3a8b0;overflow:hidden">
<div class="abs" style="left:0;top:0;width:343px;height:31px;background:linear-gradient(#f3f4f7,#e9ebef);border-bottom:1px solid #b5bac2"></div>
<div class="t" style="left:4px;top:9px;color:#30353c;margin-left:-.5px">Drag a column header here to group by that column</div>
<div class="abs" style="left:0;top:31.5px;width:343px;height:19px;background:linear-gradient(#fafbfc,#eceef2);border-bottom:1px solid #b5bac2"></div>
<div class="abs" style="left:14px;top:32px;width:1px;height:18px;background:#c3c7ce"></div>
<div class="abs" style="left:72px;top:32px;width:1px;height:18px;background:#c3c7ce"></div>
<div class="abs" style="left:130px;top:32px;width:1px;height:18px;background:#c3c7ce"></div>
<div class="abs" style="left:250px;top:32px;width:1px;height:18px;background:#c3c7ce"></div>
<div class="abs" style="left:270px;top:32px;width:1px;height:18px;background:#c3c7ce"></div>
<div class="abs" style="left:300px;top:32px;width:1px;height:18px;background:#c3c7ce"></div>
<div class="abs" style="left:326px;top:32px;width:1px;height:18px;background:#c3c7ce"></div>
<div class="cell" style="left:18px;top:31.5px;color:#30353c">Name</div>
<div class="cell" style="left:76px;top:31.5px;color:#30353c">Value</div>
<div class="cell" style="left:134px;top:31.5px;color:#30353c">Timestamp</div>
<div class="cell" style="left:254px;top:31.5px;color:#30353c">...</div>
<div class="cell" style="left:274px;top:31.5px;color:#30353c">Fe...</div>
<div class="cell" style="left:304px;top:31.5px;color:#30353c">C...</div>
<div class="abs" style="left:14px;top:50.00px;width:312px;height:19.72px;background:#ffffe1;border-bottom:1px solid #e0e2e7"></div>
<div class="abs" style="left:0;top:50.00px;width:14px;height:19.72px;background:#f1f2f5;border-bottom:1px solid #c9cdd4"></div>
<div class="cell" style="left:18px;top:50.80px">Gap</div>
<div class="cell num" style="left:76px;top:50.80px">2.39</div>
<div class="cell num" style="left:134px;top:50.80px">11/10/2019 12:53:55</div>
<div class="cell" style="left:254px;top:50.80px">...</div>
<div class="cell" style="left:274px;top:50.80px">Fe...</div>
<div class="cell" style="left:304px;top:50.80px">A...</div>
<div class="abs" style="left:14px;top:69.72px;width:312px;height:19.72px;background:#ffffe1;border-bottom:1px solid #e0e2e7"></div>
<div class="abs" style="left:0;top:69.72px;width:14px;height:19.72px;background:#f1f2f5;border-bottom:1px solid #c9cdd4"></div>
<div class="cell" style="left:18px;top:70.52px">Flush</div>
<div class="cell num" style="left:76px;top:70.52px">-0.06</div>
<div class="cell num" style="left:134px;top:70.52px">11/10/2019 12:53:55</div>
<div class="cell" style="left:254px;top:70.52px">...</div>
<div class="cell" style="left:274px;top:70.52px">Fe...</div>
<div class="cell" style="left:304px;top:70.52px">A...</div>
<div class="abs" style="left:14px;top:89.44px;width:312px;height:19.72px;background:#fff;border-bottom:1px solid #e0e2e7"></div>
<div class="abs" style="left:0;top:89.44px;width:14px;height:19.72px;background:#f1f2f5;border-bottom:1px solid #c9cdd4"></div>
<div class="cell" style="left:18px;top:90.24px">Gap</div>
<div class="cell num" style="left:76px;top:90.24px">2.42</div>
<div class="cell num" style="left:134px;top:90.24px">11/10/2019 12:53:58</div>
<div class="cell" style="left:254px;top:90.24px">...</div>
<div class="cell" style="left:274px;top:90.24px">Fe...</div>
<div class="cell" style="left:304px;top:90.24px">A...</div>
<div class="abs" style="left:14px;top:109.16px;width:312px;height:19.72px;background:#fff;border-bottom:1px solid #e0e2e7"></div>
<div class="abs" style="left:0;top:109.16px;width:14px;height:19.72px;background:#f1f2f5;border-bottom:1px solid #c9cdd4"></div>
<div class="cell" style="left:18px;top:109.96px">Flush</div>
<div class="cell num" style="left:76px;top:109.96px">-0.06</div>
<div class="cell num" style="left:134px;top:109.96px">11/10/2019 12:53:58</div>
<div class="cell" style="left:254px;top:109.96px">...</div>
<div class="cell" style="left:274px;top:109.96px">Fe...</div>
<div class="cell" style="left:304px;top:109.96px">A...</div>
<div class="abs" style="left:14px;top:128.88px;width:312px;height:19.72px;background:#fff;border-bottom:1px solid #e0e2e7"></div>
<div class="abs" style="left:0;top:128.88px;width:14px;height:19.72px;background:#f1f2f5;border-bottom:1px solid #c9cdd4"></div>
<div class="cell" style="left:18px;top:129.68px">Gap</div>
<div class="cell num" style="left:76px;top:129.68px">2.40</div>
<div class="cell num" style="left:134px;top:129.68px">11/10/2019 12:54:00</div>
<div class="cell" style="left:254px;top:129.68px">...</div>
<div class="cell" style="left:274px;top:129.68px">Fe...</div>
<div class="cell" style="left:304px;top:129.68px">A...</div>
<div class="abs" style="left:14px;top:148.60px;width:312px;height:19.72px;background:#fff;border-bottom:1px solid #e0e2e7"></div>
<div class="abs" style="left:0;top:148.60px;width:14px;height:19.72px;background:#f1f2f5;border-bottom:1px solid #c9cdd4"></div>
<div class="cell" style="left:18px;top:149.40px">Flush</div>
<div class="cell num" style="left:76px;top:149.40px">-0.05</div>
<div class="cell num" style="left:134px;top:149.40px">11/10/2019 12:54:00</div>
<div class="cell" style="left:254px;top:149.40px">...</div>
<div class="cell" style="left:274px;top:149.40px">Fe...</div>
<div class="cell" style="left:304px;top:149.40px">A...</div>
<div class="abs" style="left:14px;top:168.32px;width:312px;height:19.72px;background:#fff;border-bottom:1px solid #e0e2e7"></div>
<div class="abs" style="left:0;top:168.32px;width:14px;height:19.72px;background:#f1f2f5;border-bottom:1px solid #c9cdd4"></div>
<div class="cell" style="left:18px;top:169.12px">Gap</div>
<div class="cell num" style="left:76px;top:169.12px">2.39</div>
<div class="cell num" style="left:134px;top:169.12px">11/10/2019 12:54:03</div>
<div class="cell" style="left:254px;top:169.12px">...</div>
<div class="cell" style="left:274px;top:169.12px">Fe...</div>
<div class="cell" style="left:304px;top:169.12px">A...</div>
<div class="abs" style="left:14px;top:188.04px;width:312px;height:19.72px;background:#fff;border-bottom:1px solid #e0e2e7"></div>
<div class="abs" style="left:0;top:188.04px;width:14px;height:19.72px;background:#f1f2f5;border-bottom:1px solid #c9cdd4"></div>
<div class="cell" style="left:18px;top:188.84px">Flush</div>
<div class="cell num" style="left:76px;top:188.84px">-0.06</div>
<div class="cell num" style="left:134px;top:188.84px">11/10/2019 12:54:03</div>
<div class="cell" style="left:254px;top:188.84px">...</div>
<div class="cell" style="left:274px;top:188.84px">Fe...</div>
<div class="cell" style="left:304px;top:188.84px">A...</div>
<div class="abs" style="left:14px;top:207.76px;width:312px;height:19.72px;background:#fff;border-bottom:1px solid #e0e2e7"></div>
<div class="abs" style="left:0;top:207.76px;width:14px;height:19.72px;background:#f1f2f5;border-bottom:1px solid #c9cdd4"></div>
<div class="cell" style="left:18px;top:208.56px">Gap</div>
<div class="cell num" style="left:76px;top:208.56px">2.43</div>
<div class="cell num" style="left:134px;top:208.56px">11/10/2019 12:54:06</div>
<div class="cell" style="left:254px;top:208.56px">...</div>
<div class="cell" style="left:274px;top:208.56px">Fe...</div>
<div class="cell" style="left:304px;top:208.56px">A...</div>
<div class="abs" style="left:14px;top:227.48px;width:312px;height:19.72px;background:#fff;border-bottom:1px solid #e0e2e7"></div>
<div class="abs" style="left:0;top:227.48px;width:14px;height:19.72px;background:#f1f2f5;border-bottom:1px solid #c9cdd4"></div>
<div class="cell" style="left:18px;top:228.28px">Flush</div>
<div class="cell num" style="left:76px;top:228.28px">-0.06</div>
<div class="cell num" style="left:134px;top:228.28px">11/10/2019 12:54:06</div>
<div class="cell" style="left:254px;top:228.28px">...</div>
<div class="cell" style="left:274px;top:228.28px">Fe...</div>
<div class="cell" style="left:304px;top:228.28px">A...</div>
<div class="abs" style="left:14px;top:247.20px;width:312px;height:19.72px;background:#fff;border-bottom:1px solid #e0e2e7"></div>
<div class="abs" style="left:0;top:247.20px;width:14px;height:19.72px;background:#f1f2f5;border-bottom:1px solid #c9cdd4"></div>
<div class="cell" style="left:18px;top:248.00px">Gap</div>
<div class="cell num" style="left:76px;top:248.00px">2.41</div>
<div class="cell num" style="left:134px;top:248.00px">11/10/2019 12:54:08</div>
<div class="cell" style="left:254px;top:248.00px">...</div>
<div class="cell" style="left:274px;top:248.00px">Fe...</div>
<div class="cell" style="left:304px;top:248.00px">A...</div>
<div class="abs" style="left:14px;top:266.92px;width:312px;height:19.72px;background:#fff;border-bottom:1px solid #e0e2e7"></div>
<div class="abs" style="left:0;top:266.92px;width:14px;height:19.72px;background:#f1f2f5;border-bottom:1px solid #c9cdd4"></div>
<div class="cell" style="left:18px;top:267.72px">Flush</div>
<div class="cell num" style="left:76px;top:267.72px">-0.06</div>
<div class="cell num" style="left:134px;top:267.72px">11/10/2019 12:54:08</div>
<div class="cell" style="left:254px;top:267.72px">...</div>
<div class="cell" style="left:274px;top:267.72px">Fe...</div>
<div class="cell" style="left:304px;top:267.72px">A...</div>
<div class="abs" style="left:14px;top:286.64px;width:312px;height:19.72px;background:#fff;border-bottom:1px solid #e0e2e7"></div>
<div class="abs" style="left:0;top:286.64px;width:14px;height:19.72px;background:#f1f2f5;border-bottom:1px solid #c9cdd4"></div>
<div class="cell" style="left:18px;top:287.44px">Gap</div>
<div class="cell num" style="left:76px;top:287.44px">2.42</div>
<div class="cell num" style="left:134px;top:287.44px">11/10/2019 12:54:11</div>
<div class="cell" style="left:254px;top:287.44px">...</div>
<div class="cell" style="left:274px;top:287.44px">Fe...</div>
<div class="cell" style="left:304px;top:287.44px">A...</div>
<div class="abs" style="left:14px;top:50px;width:1px;height:260px;background:#dfe1e6"></div>
<div class="abs" style="left:72px;top:50px;width:1px;height:260px;background:#dfe1e6"></div>
<div class="abs" style="left:130px;top:50px;width:1px;height:260px;background:#dfe1e6"></div>
<div class="abs" style="left:250px;top:50px;width:1px;height:260px;background:#dfe1e6"></div>
<div class="abs" style="left:270px;top:50px;width:1px;height:260px;background:#dfe1e6"></div>
<div class="abs" style="left:300px;top:50px;width:1px;height:260px;background:#dfe1e6"></div>
<div class="abs" style="left:326px;top:50px;width:1px;height:260px;background:#dfe1e6"></div>
<svg class="abs" style="left:5px;top:56px" width="5" height="8" viewBox="0 0 5 8"><path d="M.5 .5l3.500 3.500L.5 7.500z" fill="#6a6f77"/></svg>
<div class="abs" style="left:327px;top:50px;width:16px;height:260px;background:#fbfbfc;border-left:1px solid #e1e3e8"></div>
<div class="abs" style="left:328px;top:67px;width:13px;height:123px;background:linear-gradient(90deg,#fdfdfd,#eceef1);border:1px solid #b3b8c0;border-radius:2px"></div>
<svg class="abs" style="left:331px;top:56px" width="8" height="6" viewBox="0 0 8 6"><path d="M0 5l4-4.500L8 5z" fill="#50555c"/></svg>
<svg class="abs" style="left:331px;top:288.5px" width="8" height="6" viewBox="0 0 8 6"><path d="M0 .5l4 4.500L8 .5z" fill="#50555c"/></svg>
<svg class="abs" style="left:331px;top:125px" width="7" height="7" viewBox="0 0 7 7"><path d="M0 1h7M0 3h7M0 5h7" stroke="#8a9099" stroke-width="1"/></svg>
</div>
<div class="abs" style="left:0;top:321px;width:347px;height:19px;background:linear-gradient(#d6dae0,#dde0e6)"></div>
<div class="abs" style="left:128px;top:321px;width:55px;height:19px;background:#f6f7f9;border:1px solid #b5bac2;border-top:none"></div>
<div class="t" style="left:12px;top:327px;color:#4a525e">Properties</div>
<div class="t" style="left:79px;top:327px;color:#4a525e">Loggers</div>
<div class="t" style="left:137px;top:327px;color:#4a525e">Results</div>
</div>
<div class="abs" style="left:355px;top:117px;width:1081px;height:26px;background:linear-gradient(#eceef2,#f1f2f5)"></div>
<div class="abs" style="left:357px;top:120px;width:84px;height:23px;background:linear-gradient(#f7f8fa,#eef0f3);border:1px solid #b4b9c1;border-bottom:none;border-radius:2px 2px 0 0"></div>
<div class="t" style="left:366px;top:125px;color:#30353c">Workspace</div>
<svg class="abs" style="left:427px;top:128px" width="8" height="8" viewBox="0 0 8 8"><path d="M1 1l6 6M7 1l-6 6" stroke="#3c3f45" stroke-width="1.700"/></svg>
<div class="abs" style="left:441px;top:122px;width:147px;height:21px;background:linear-gradient(#e6e8ec,#d7dadf);border:1px solid #b9bdc5;border-bottom:none;border-left:none"></div>
<div class="t" style="left:448px;top:126px;color:#30353c">Automotive Measurement</div>
<svg class="abs" style="left:1423px;top:127.500px" width="8" height="5" viewBox="0 0 8 5"><path d="M0 0h8L4 4.300z" fill="#5a5f67"/></svg><div id="canvas">
<svg class="abs" style="left:0;top:0" width="1081" height="644" viewBox="356 142 1081 644" font-family="Liberation Sans, sans-serif">
<defs>
<linearGradient id="ng" x1="0" y1="0" x2="1" y2="1"><stop offset="0" stop-color="#a0a0a0"/><stop offset="1" stop-color="#5c5c5c"/></linearGradient>
</defs>
<rect x="356" y="142" width="1081" height="644" fill="#040404"/>
<path d="M358.5 142v644M361.5 142v644M365.5 142v644M368.5 142v644M372.5 142v644M375.5 142v644M379.5 142v644M382.5 142v644M389.5 142v644M392.5 142v644M396.5 142v644M399.5 142v644M403.5 142v644M406.5 142v644M410.5 142v644M413.5 142v644M417.5 142v644M424.5 142v644M427.5 142v644M431.5 142v644M434.5 142v644M437.5 142v644M441.5 142v644M444.5 142v644M448.5 142v644M451.5 142v644M458.5 142v644M462.5 142v644M465.5 142v644M469.5 142v644M472.5 142v644M476.5 142v644M479.5 142v644M482.5 142v644M486.5 142v644M493.5 142v644M496.5 142v644M500.5 142v644M503.5 142v644M507.5 142v644M510.5 142v644M514.5 142v644M517.5 142v644M521.5 142v644M527.5 142v644M531.5 142v644M534.5 142v644M538.5 142v644M541.5 142v644M545.5 142v644M548.5 142v644M552.5 142v644M555.5 142v644M562.5 142v644M566.5 142v644M569.5 142v644M573.5 142v644M576.5 142v644M579.5 142v644M583.5 142v644M586.5 142v644M590.5 142v644M597.5 142v644M600.5 142v644M604.5 142v644M607.5 142v644M611.5 142v644M614.5 142v644M618.5 142v644M621.5 142v644M624.5 142v644M631.5 142v644M635.5 142v644M638.5 142v644M642.5 142v644M645.5 142v644M649.5 142v644M652.5 142v644M656.5 142v644M659.5 142v644M666.5 142v644M669.5 142v644M673.5 142v644M676.5 142v644M680.5 142v644M683.5 142v644M687.5 142v644M690.5 142v644M694.5 142v644M701.5 142v644M704.5 142v644M708.5 142v644M711.5 142v644M714.5 142v644M718.5 142v644M721.5 142v644M725.5 142v644M728.5 142v644M735.5 142v644M739.5 142v644M742.5 142v644M746.5 142v644M749.5 142v644M753.5 142v644M756.5 142v644M760.5 142v644M763.5 142v644M770.5 142v644M773.5 142v644M777.5 142v644M780.5 142v644M784.5 142v644M787.5 142v644M791.5 142v644M794.5 142v644M798.5 142v644M805.5 142v644M808.5 142v644M811.5 142v644M815.5 142v644M818.5 142v644M822.5 142v644M825.5 142v644M829.5 142v644M832.5 142v644M839.5 142v644M843.5 142v644M846.5 142v644M850.5 142v644M853.5 142v644M856.5 142v644M860.5 142v644M863.5 142v644M867.5 142v644M874.5 142v644M877.5 142v644M881.5 142v644M884.5 142v644M888.5 142v644M891.5 142v644M895.5 142v644M898.5 142v644M901.5 142v644M908.5 142v644M912.5 142v644M915.5 142v644M919.5 142v644M922.5 142v644M926.5 142v644M929.5 142v644M933.5 142v644M936.5 142v644M943.5 142v644M947.5 142v644M950.5 142v644M953.5 142v644M957.5 142v644M960.5 142v644M964.5 142v644M967.5 142v644M971.5 142v644M978.5 142v644M981.5 142v644M985.5 142v644M988.5 142v644M992.5 142v644M995.5 142v644M998.5 142v644M1002.5 142v644M1005.5 142v644M1012.5 142v644M1016.5 142v644M1019.5 142v644M1023.5 142v644M1026.5 142v644M1030.5 142v644M1033.5 142v644M1037.5 142v644M1040.5 142v644M1047.5 142v644M1050.5 142v644M1054.5 142v644M1057.5 142v644M1061.5 142v644M1064.5 142v644M1068.5 142v644M1071.5 142v644M1075.5 142v644M1082.5 142v644M1085.5 142v644M1088.5 142v644M1092.5 142v644M1095.5 142v644M1099.5 142v644M1102.5 142v644M1106.5 142v644M1109.5 142v644M1116.5 142v644M1120.5 142v644M1123.5 142v644M1127.5 142v644M1130.5 142v644M1134.5 142v644M1137.5 142v644M1140.5 142v644M1144.5 142v644M1151.5 142v644M1154.5 142v644M1158.5 142v644M1161.5 142v644M1165.5 142v644M1168.5 142v644M1172.5 142v644M1175.5 142v644M1179.5 142v644M1185.5 142v644M1189.5 142v644M1192.5 142v644M1196.5 142v644M1199.5 142v644M1203.5 142v644M1206.5 142v644M1210.5 142v644M1213.5 142v644M1220.5 142v644M1224.5 142v644M1227.5 142v644M1230.5 142v644M1234.5 142v644M1237.5 142v644M1241.5 142v644M1244.5 142v644M1248.5 142v644M1255.5 142v644M1258.5 142v644M1262.5 142v644M1265.5 142v644M1269.5 142v644M1272.5 142v644M1275.5 142v644M1279.5 142v644M1282.5 142v644M1289.5 142v644M1293.5 142v644M1296.5 142v644M1300.5 142v644M1303.5 142v644M1307.5 142v644M1310.5 142v644M1314.5 142v644M1317.5 142v644M1324.5 142v644M1327.5 142v644M1331.5 142v644M1334.5 142v644M1338.5 142v644M1341.5 142v644M1345.5 142v644M1348.5 142v644M1352.5 142v644M1359.5 142v644M1362.5 142v644M1366.5 142v644M1369.5 142v644M1372.5 142v644M1376.5 142v644M1379.5 142v644M1383.5 142v644M1386.5 142v644M1393.5 142v644M1397.5 142v644M1400.5 142v644M1404.5 142v644M1407.5 142v644M1411.5 142v644M1414.5 142v644M1417.5 142v644M1421.5 142v644M1428.5 142v644M1431.5 142v644M1435.5 142v644M356 143.5h1081M356 147.5h1081M356 150.5h1081M356 154.5h1081M356 157.5h1081M356 160.5h1081M356 164.5h1081M356 167.5h1081M356 174.5h1081M356 178.5h1081M356 181.5h1081M356 185.5h1081M356 188.5h1081M356 192.5h1081M356 195.5h1081M356 198.5h1081M356 202.5h1081M356 209.5h1081M356 212.5h1081M356 216.5h1081M356 219.5h1081M356 223.5h1081M356 226.5h1081M356 230.5h1081M356 233.5h1081M356 236.5h1081M356 243.5h1081M356 247.5h1081M356 250.5h1081M356 254.5h1081M356 257.5h1081M356 261.5h1081M356 264.5h1081M356 268.5h1081M356 271.5h1081M356 278.5h1081M356 281.5h1081M356 285.5h1081M356 288.5h1081M356 292.5h1081M356 295.5h1081M356 299.5h1081M356 302.5h1081M356 306.5h1081M356 312.5h1081M356 316.5h1081M356 319.5h1081M356 323.5h1081M356 326.5h1081M356 330.5h1081M356 333.5h1081M356 337.5h1081M356 340.5h1081M356 347.5h1081M356 351.5h1081M356 354.5h1081M356 357.5h1081M356 361.5h1081M356 364.5h1081M356 368.5h1081M356 371.5h1081M356 375.5h1081M356 382.5h1081M356 385.5h1081M356 389.5h1081M356 392.5h1081M356 395.5h1081M356 399.5h1081M356 402.5h1081M356 406.5h1081M356 409.5h1081M356 416.5h1081M356 420.5h1081M356 423.5h1081M356 427.5h1081M356 430.5h1081M356 433.5h1081M356 437.5h1081M356 440.5h1081M356 444.5h1081M356 451.5h1081M356 454.5h1081M356 458.5h1081M356 461.5h1081M356 465.5h1081M356 468.5h1081M356 471.5h1081M356 475.5h1081M356 478.5h1081M356 485.5h1081M356 489.5h1081M356 492.5h1081M356 496.5h1081M356 499.5h1081M356 503.5h1081M356 506.5h1081M356 509.5h1081M356 513.5h1081M356 520.5h1081M356 523.5h1081M356 527.5h1081M356 530.5h1081M356 534.5h1081M356 537.5h1081M356 541.5h1081M356 544.5h1081M356 548.5h1081M356 554.5h1081M356 558.5h1081M356 561.5h1081M356 565.5h1081M356 568.5h1081M356 572.5h1081M356 575.5h1081M356 579.5h1081M356 582.5h1081M356 589.5h1081M356 592.5h1081M356 596.5h1081M356 599.5h1081M356 603.5h1081M356 606.5h1081M356 610.5h1081M356 613.5h1081M356 617.5h1081M356 624.5h1081M356 627.5h1081M356 630.5h1081M356 634.5h1081M356 637.5h1081M356 641.5h1081M356 644.5h1081M356 648.5h1081M356 651.5h1081M356 658.5h1081M356 662.5h1081M356 665.5h1081M356 668.5h1081M356 672.5h1081M356 675.5h1081M356 679.5h1081M356 682.5h1081M356 686.5h1081M356 693.5h1081M356 696.5h1081M356 700.5h1081M356 703.5h1081M356 706.5h1081M356 710.5h1081M356 713.5h1081M356 717.5h1081M356 720.5h1081M356 727.5h1081M356 731.5h1081M356 734.5h1081M356 738.5h1081M356 741.5h1081M356 744.5h1081M356 748.5h1081M356 751.5h1081M356 755.5h1081M356 762.5h1081M356 765.5h1081M356 769.5h1081M356 772.5h1081M356 776.5h1081M356 779.5h1081M356 783.5h1081" stroke="#131313" stroke-width="1" fill="none"/>
<path d="M386.5 142v644M420.5 142v644M455.5 142v644M489.5 142v644M524.5 142v644M559.5 142v644M593.5 142v644M628.5 142v644M663.5 142v644M697.5 142v644M732.5 142v644M766.5 142v644M801.5 142v644M836.5 142v644M870.5 142v644M905.5 142v644M940.5 142v644M974.5 142v644M1009.5 142v644M1043.5 142v644M1078.5 142v644M1113.5 142v644M1147.5 142v644M1182.5 142v644M1217.5 142v644M1251.5 142v644M1286.5 142v644M1321.5 142v644M1355.5 142v644M1390.5 142v644M1424.5 142v644M356 171.5h1081M356 205.5h1081M356 240.5h1081M356 274.5h1081M356 309.5h1081M356 344.5h1081M356 378.5h1081M356 413.5h1081M356 447.5h1081M356 482.5h1081M356 516.5h1081M356 551.5h1081M356 586.5h1081M356 620.5h1081M356 655.5h1081M356 689.5h1081M356 724.5h1081M356 758.5h1081" stroke="#363636" stroke-width="1" fill="none"/>
<path d="M653.5 148V300" stroke="#585858" stroke-width="1"/><path d="M653.5 300V786" stroke="#444444" stroke-width="1"/>
<path d="M884.5 148V300" stroke="#585858" stroke-width="1"/><path d="M884.5 300V786" stroke="#444444" stroke-width="1"/>
<path d="M1131.5 148V300" stroke="#585858" stroke-width="1"/><path d="M1131.5 300V786" stroke="#444444" stroke-width="1"/>
<rect x="653.5" y="148.500" width="11" height="12" fill="#4a4a4a" stroke="#b8b8b8"/>
<text x="658.5" y="158" font-size="9.500" fill="#dcdcdc" text-anchor="middle">1</text>
<rect x="884.5" y="148.500" width="11" height="12" fill="#4a4a4a" stroke="#b8b8b8"/>
<text x="889.5" y="158" font-size="9.500" fill="#dcdcdc" text-anchor="middle">2</text>
<rect x="1131.5" y="148.500" width="11" height="12" fill="#4a4a4a" stroke="#b8b8b8"/>
<text x="1136.5" y="158" font-size="9.500" fill="#dcdcdc" text-anchor="middle">3</text>
<rect x="653.5" y="171.500" width="31" height="17" fill="#4e4e4e" stroke="#b0b0b0"/>
<text x="655.5" y="185" font-size="12.500" fill="#c4c4c4" textLength="23.500" lengthAdjust="spacingAndGlyphs">LHS</text>
<rect x="1131.5" y="171.500" width="31" height="17" fill="#4e4e4e" stroke="#b0b0b0"/>
<text x="1133.5" y="185" font-size="12.500" fill="#c4c4c4" textLength="23.500" lengthAdjust="spacingAndGlyphs">RHS</text>
<path d="M455.0 398.3L754.0 411.1A104.5 104.5 0 0 1 845.7 474.7L809.3 488.9A65.5 65.5 0 0 0 752.3 450.1L455.0 437.3Z" fill="#0a1876"/>
<path d="M1321.5 439.8L1046.4 424.2A104.5 104.5 0 0 0 947.5 480.9L979.0 497.0A65.5 65.5 0 0 1 1044.2 463.1L1321.5 478.9Z" fill="#0a1876"/>
<circle cx="749.5" cy="515.5" r="104.5" fill="none" stroke="#909090" stroke-width="1"/>
<circle cx="1040.5" cy="528.5" r="104.5" fill="none" stroke="#909090" stroke-width="1"/>
<path d="M455.0 398.3L754.0 411.1A104.5 104.5 0 0 1 845.7 474.7" fill="none" stroke="#f01420" stroke-width="3"/>
<path d="M1321.5 439.8L1046.4 424.2A104.5 104.5 0 0 0 947.5 480.9" fill="none" stroke="#f01420" stroke-width="3"/>
<path d="M746 408.3v6M743 411.3h6" stroke="#2fa02f" stroke-width="1" opacity=".55"/>
<path d="M767.5 409.3v6M764.5 412.3h6" stroke="#2fa02f" stroke-width="1" opacity=".55"/>
<path d="M1032.7 420.6v6M1029.7 423.6h6" stroke="#2fa02f" stroke-width="1" opacity=".55"/>
<path d="M1051.3 421.5v6M1048.3 424.5h6" stroke="#2fa02f" stroke-width="1" opacity=".55"/>
<path d="M844.6 472v6M841.6 475h6" stroke="#2fa02f" stroke-width="1" opacity=".55"/>
<path d="M948 478v6M945 481h6" stroke="#2fa02f" stroke-width="1" opacity=".55"/>
<path d="M455 396v6M452 399h6" stroke="#2fa02f" stroke-width="1" opacity=".55"/>
<path d="M1321.5 436v6M1318.5 439h6" stroke="#2fa02f" stroke-width="1" opacity=".55"/>
<path d="M741.5 515.5h16M749.5 507.5v16" stroke="#18b018" stroke-width="1"/>
<path d="M1032.5 528.5h16M1040.5 520.5v16" stroke="#18b018" stroke-width="1"/>
<text x="613" y="425" font-size="10" fill="#e6e6f0" text-anchor="middle">2</text>
<text x="797.5" y="443" font-size="10" fill="#e6e6f0" text-anchor="middle">3</text>
<text x="1001.6" y="453.5" font-size="10" fill="#e6e6f0" text-anchor="middle">1</text>
<text x="1178.5" y="451" font-size="10" fill="#e6e6f0" text-anchor="middle">2</text>
<path d="M767.5 412.300L945 419.900" stroke="#7a7a7a" stroke-width="1" stroke-dasharray="2.500 2.500" fill="none"/>
<path d="M1046 424.100L936 418.200" stroke="#7a7a7a" stroke-width="1" stroke-dasharray="2.500 2.500" fill="none"/>
<path d="M749.5 524L740.3 702" stroke="#7a7a7a" stroke-width="1" stroke-dasharray="2.500 2.500" fill="none"/>
<path d="M1040.5 537L1030.700 716.500" stroke="#7a7a7a" stroke-width="1" stroke-dasharray="2.500 2.500" fill="none"/>
<path d="M853.900 520.400L844.300 708.500" stroke="#7a7a7a" stroke-width="1" stroke-dasharray="2.500 2.500" fill="none"/>
<path d="M936.100 523.600L929 711" stroke="#7a7a7a" stroke-width="1" stroke-dasharray="2.500 2.500" fill="none"/>
<path d="M940.500 397.500V441" stroke="#d0d0d0" stroke-width="1"/>
<path d="M938.300 408h4.400l-2.200 6.500zM938.300 432.500h4.400l-2.200-6.500z" fill="#d0d0d0"/>
<path d="M846 692.300L928 696.600" stroke="#bcbcbc" stroke-width="1"/>
<path d="M845.500 692.300l10-3-.4 6.500zM928.500 696.600l-10 3 .4-6.500z" fill="#c4c4c4"/>
<g transform="translate(835.500 675.500) rotate(3)"><rect x="0" y="-25" width="107" height="28" fill="#000"/><text x="1" y="-1" font-size="28.700" fill="#fff" textLength="105" lengthAdjust="spacingAndGlyphs">2.39mm</text></g>
<g transform="translate(924.300 421.700) rotate(-87.500)"><rect x="-1" y="-25" width="119" height="28" fill="#000"/><text x="0" y="-2" font-size="28.700" fill="#fff" textLength="116.500" lengthAdjust="spacingAndGlyphs">-0.06mm</text></g>
<path d="M518.500 749V771.700H866V749M692 749V771.700" stroke="#c0c0c0" stroke-width="1.700" fill="none"/>
<path d="M553.2 760.500V771.700M588.0 760.500V771.700M622.8 760.500V771.700M657.5 760.500V771.700M727.0 760.500V771.700M761.8 760.500V771.700M796.5 760.500V771.700M831.2 760.500V771.700" stroke="#c0c0c0" stroke-width="1.600" fill="none"/>
<text x="554" y="748.500" font-size="8.600" fill="#d0d0d0">1mm</text>
<text x="518.500" y="785" font-size="8.600" fill="#d0d0d0">0mm</text>
<text x="865" y="785" font-size="8.600" fill="#d0d0d0">10mm</text>
<text x="374" y="778" font-size="19.500" fill="#e8e8e8" textLength="91" lengthAdjust="spacingAndGlyphs">x8.3 [mm]</text>
<text x="1392" y="788" font-size="12" fill="#c8c8c8" textLength="40" lengthAdjust="spacingAndGlyphs">7.7.583</text>
<text x="373.500" y="161" font-size="12" fill="#c4c4c4" textLength="164.500" lengthAdjust="spacingAndGlyphs">Mouse: (11.698mm, 7.439mm)</text>
<text x="373.500" y="172" font-size="12" fill="#c4c4c4" textLength="86" lengthAdjust="spacingAndGlyphs">Rotation: 0.00°</text>
<text x="376" y="236" font-size="18.500" fill="#fff" textLength="140" lengthAdjust="spacingAndGlyphs">#4063 Feature 1</text>
<text x="375" y="259.500" font-size="18.500" fill="#fff" textLength="112" lengthAdjust="spacingAndGlyphs">Gap: 2.39mm</text>
<text x="375" y="282.500" font-size="18.500" fill="#fff" textLength="129" lengthAdjust="spacingAndGlyphs">Flush: -0.06mm</text>
<path d="M1374 147L1388.500 161.500H1359.500Z" fill="url(#ng)" stroke="#b4b4b4" stroke-width=".8"/>
<path d="M1374 222L1388.500 207H1359.500Z" fill="url(#ng)" stroke="#b4b4b4" stroke-width=".8"/>
<path d="M1338.300 184.400L1353.500 170.500V198.500Z" fill="url(#ng)" stroke="#b4b4b4" stroke-width=".8"/>
<path d="M1412 184.400L1396.800 170.500V198.500Z" fill="url(#ng)" stroke="#b4b4b4" stroke-width=".8"/>
<path d="M1373.800 170L1388.300 184.400L1373.800 199L1359.300 184.400Z" fill="url(#ng)" stroke="#b4b4b4" stroke-width=".8"/>
<rect x="1367.8" y="178.4" width="5" height="5" fill="#111" stroke="#f0f0f0" stroke-width="1"/>
<rect x="1374.8" y="178.4" width="5" height="5" fill="#111" stroke="#f0f0f0" stroke-width="1"/>
<rect x="1367.8" y="185.4" width="5" height="5" fill="#111" stroke="#f0f0f0" stroke-width="1"/>
<rect x="1374.8" y="185.4" width="5" height="5" fill="#111" stroke="#f0f0f0" stroke-width="1"/>
<rect x="1419.500" y="147" width="14.500" height="14.500" fill="url(#ng)" stroke="#b4b4b4" stroke-width=".8"/>
<rect x="1419.500" y="207" width="14.500" height="14.500" fill="url(#ng)" stroke="#b4b4b4" stroke-width=".8"/>
<path d="M1424 154.300h5.500M1426.700 151.500v5.500M1424 214.300h5.500" stroke="#eee" stroke-width="1.300"/>
<rect x="1424.500" y="164" width="4.500" height="3.500" rx="1" fill="#c8c8c8"/>
<rect x="1424.500" y="169" width="4.500" height="3.500" rx="1" fill="#c8c8c8"/>
<rect x="1424.500" y="187" width="4.500" height="3.500" rx="1" fill="#c8c8c8"/>
<rect x="1424.500" y="192" width="4.500" height="3.500" rx="1" fill="#c8c8c8"/>
<rect x="1424.500" y="197" width="4.500" height="3.500" rx="1" fill="#c8c8c8"/>
<rect x="1424.500" y="202" width="4.500" height="3.500" rx="1" fill="#c8c8c8"/>
<rect x="1425.500" y="180" width="2.500" height="6" fill="#aaa"/>
<rect x="1421.500" y="174.500" width="10.500" height="4.500" rx="1" fill="#e8e8e8" stroke="#fff" stroke-width=".6"/>
<rect x="1338.5" y="225.500" width="14.800" height="14.800" fill="url(#ng)" stroke="#b4b4b4" stroke-width=".8"/>
<rect x="1379.3" y="225.500" width="14.800" height="14.800" fill="url(#ng)" stroke="#b4b4b4" stroke-width=".8"/>
<rect x="1419.5" y="225.500" width="14.800" height="14.800" fill="url(#ng)" stroke="#b4b4b4" stroke-width=".8"/>
<text x="1386.700" y="237.500" font-size="11" font-weight="bold" fill="#fff" text-anchor="middle">Z</text>
<path d="M1342.500 230.500h4a3.300 3.300 0 1 1-3.300 4" fill="none" stroke="#fff" stroke-width="2"/><path d="M1340.500 230.500l3.500-3v6z" fill="#fff"/>
<path d="M1430.500 230.500h-4a3.300 3.300 0 1 0 3.300 4" fill="none" stroke="#fff" stroke-width="2"/><path d="M1432.500 230.500l-3.500-3v6z" fill="#fff"/>
<rect x="1356" y="231" width="3.500" height="4.500" rx="1" fill="#c8c8c8"/>
<rect x="1360.5" y="231" width="3.500" height="4.500" rx="1" fill="#c8c8c8"/>
<rect x="1365" y="231" width="3.500" height="4.500" rx="1" fill="#c8c8c8"/>
<rect x="1369.5" y="231" width="3.500" height="4.500" rx="1" fill="#c8c8c8"/>
<rect x="1374" y="231" width="3.500" height="4.500" rx="1" fill="#c8c8c8"/>
<rect x="1396" y="231" width="3.500" height="4.500" rx="1" fill="#c8c8c8"/>
<rect x="1400.5" y="231" width="3.500" height="4.500" rx="1" fill="#c8c8c8"/>
<rect x="1405" y="231" width="3.500" height="4.500" rx="1" fill="#c8c8c8"/>
<rect x="1409.5" y="231" width="3.500" height="4.500" rx="1" fill="#c8c8c8"/>
<rect x="1414" y="231" width="3.500" height="4.500" rx="1" fill="#c8c8c8"/>
</svg></div>
</div></body></html>
